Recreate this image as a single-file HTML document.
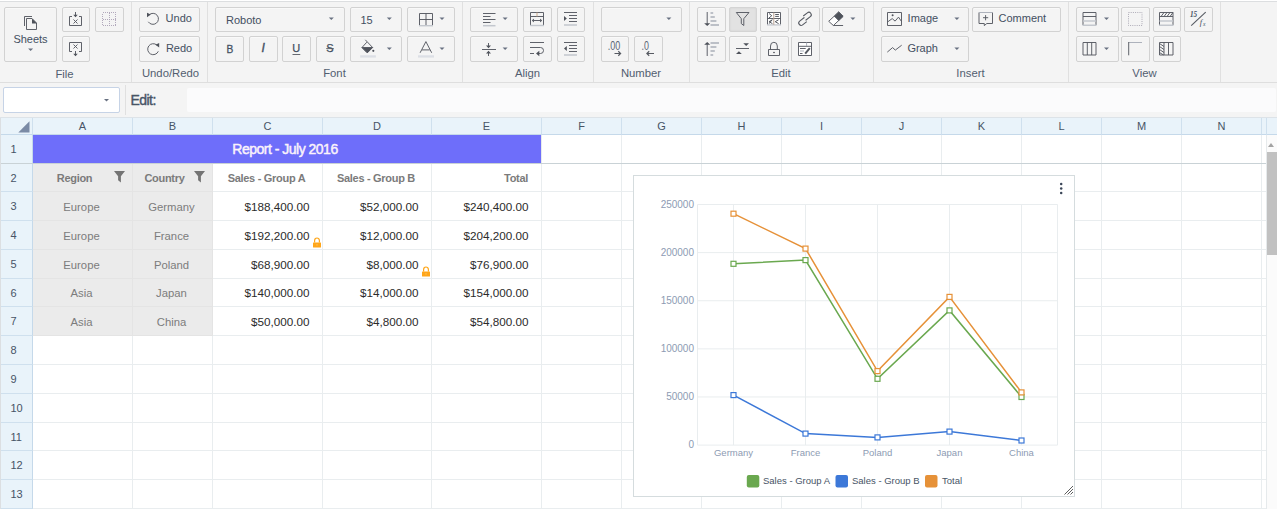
<!DOCTYPE html>
<html lang="en"><head><meta charset="utf-8"><title>Spreadsheet</title>
<style>
*{box-sizing:border-box;margin:0;padding:0}
html,body{width:1277px;height:509px;overflow:hidden;background:#fff}
body{font-family:"Liberation Sans",sans-serif;color:#475466;position:relative}
#tb{position:absolute;left:0;top:0;width:1277px;height:83px;background:#f4f4f4;border-bottom:1px solid #dedede}
#tb::before{content:'';position:absolute;left:0;top:0;width:100%;height:2px;background:linear-gradient(#fff 0,#fff 1px,#dcdee0 1px,#dcdee0 2px)}
#tb .sep{position:absolute;top:2px;height:80px;width:1px;background:#e0e0e0}
#ov{position:absolute;left:0;top:0}
#ov text{font-family:"Liberation Sans",sans-serif;stroke:none;fill:#434f61;font-size:11px}
#ov .gl{font-size:11.3px;fill:#525e70}
#ov .fb{font-size:11.8px;stroke:#475466;stroke-width:.3px}
.fu,.fs{stroke:#434f61!important;stroke-width:.25px!important}
#ov .fi{font-style:italic;font-size:12px;stroke:#475466;stroke-width:.4px}
#ov .nm{font-size:12.3px;fill:#5a6576}
#ov .fx1{font-family:"Liberation Serif",serif;font-style:italic;font-weight:bold;font-size:7.2px}
#ov .fx3{font-family:"Liberation Serif",serif;font-style:italic;font-size:5.5px}
#ov .fx2{font-family:"Liberation Serif",serif;font-style:italic;font-size:8.5px}
.b{position:absolute;border:1px solid #d2d2d2;border-radius:2px;background:#f4f4f4;box-shadow:inset 0 1px #f9f9f9}
.b.act{background:#e2e2e2;border-color:#d4d4d4;box-shadow:inset 0 0 2px #d0d0d0}
#fb{position:absolute;left:0;top:83px;width:1277px;height:34px;background:#f4f4f4}
#fb .nb{position:absolute;left:3px;top:4px;width:117px;height:26px;background:#fff;border:1px solid #c6d3e6;border-radius:2px}
#fb .fsep{position:absolute;left:125px;top:2px;width:1px;height:30px;background:#e0e0e0}
#fb .el{position:absolute;left:130.5px;top:9px;font-size:14px;-webkit-text-stroke:.4px #475466;line-height:16px;color:#475466;letter-spacing:-.55px}
#fb .ei{position:absolute;left:187px;top:5px;width:1089px;height:24px;background:#fbfbfc;border-radius:2px}
#grid{position:absolute;left:0;top:117px;width:1277px;height:392px;overflow:hidden;background:#fff}
#grid::before{content:'';position:absolute;z-index:3;left:0;top:0;width:100%;height:1px;background:#dde3e8}
.ch{position:absolute;top:0;height:18px;background:#e9f3fa;border-right:1px solid #cfe0ee;border-bottom:1px solid #c5d9ea;font-size:11px;line-height:18px;text-align:center;color:#475466}
.ch .tri{position:absolute;left:18.300px;top:3.700px}
.row{position:absolute;left:0;width:1277px}
.rh{position:absolute;left:0;top:0;width:33px;height:100%;background:#e9f3fa;border-right:1px solid #c5d9ea;border-bottom:1px solid #cfe0ee;font-size:11px;text-align:center;color:#475466;display:flex;align-items:center;justify-content:flex-start;padding-left:10.5px}
.c{position:absolute;top:0;height:100%;border-right:1px solid #e9edef;border-bottom:1px solid #e9edef;font-size:11.3px;color:#666;white-space:nowrap;display:flex;align-items:center;justify-content:center;padding:0 14px 0 12px}
.c.g{background:#ebebeb;border-color:#e4e4e4;color:#7c7c7c;padding-top:1.5px}
.c.n{justify-content:flex-end;color:#2b2b2b;font-size:11.7px;padding-right:12.5px}
.c.hd{font-weight:bold;color:#7b7b7b;padding-top:0;font-size:11px;letter-spacing:-.3px}
.c.hd.r{justify-content:flex-end;padding-right:13px}
.c.title{background:#6e6efa;color:#fbf3fb;font-size:14px;-webkit-text-stroke:.45px #fbf3fb;letter-spacing:-.5px;padding-bottom:1px;border-color:#6e6efa;border-right-color:#e6eaec;padding-right:16px}
.c svg{position:absolute}
.c.f{padding-right:28px}
.c .fn{right:7.500px;top:6.800px}
.c .lk{right:1.100px;bottom:1.500px}
.frz{position:absolute;left:0;top:46px;width:1277px;height:1px;background:#c9d2d6}
.lb{position:absolute;left:0;top:0;width:1px;height:392px;background:#dcdfe2}
.sb{position:absolute;left:1266px;top:18px;width:11px;height:374px;background:#fbfbfb;border-left:1px solid #e6eaec}
.sb .up{position:absolute;left:0.9px;top:7.5px;width:0;height:0;border-left:3.5px solid transparent;border-right:3.5px solid transparent;border-bottom:4px solid #a3a3a3}
.sb .th{position:absolute;left:0;top:17px;width:10px;height:102.5px;background:#c1c1c1}
#chart{position:absolute;left:633px;top:58px;width:442px;height:322px;background:#fff;border:1px solid #d5dcde}
#chart svg{position:absolute;left:0;top:0}
#chart text{font-family:"Liberation Sans",sans-serif;font-size:9.5px;fill:#8d9bb3}
#chart .yl{font-size:10px}
#chart .lg{fill:#475466}

.hl{position:absolute;left:1266px;top:0;width:1px;height:18px;background:#cfe0ee;z-index:2}

</style></head>
<body>
<div id="tb">
<i class="sep" style="left:131px"></i>
<i class="sep" style="left:207px"></i>
<i class="sep" style="left:462px"></i>
<i class="sep" style="left:593px"></i>
<i class="sep" style="left:689px"></i>
<i class="sep" style="left:873px"></i>
<i class="sep" style="left:1068px"></i>
<i class="sep" style="left:1220px"></i>
<div class="b" style="left:4px;top:7px;width:53px;height:55px"></div>
<div class="b" style="left:62px;top:7px;width:28px;height:25px"></div>
<div class="b" style="left:95px;top:7px;width:29px;height:25px"></div>
<div class="b" style="left:62px;top:36px;width:28px;height:26px"></div>
<div class="b" style="left:139px;top:7px;width:61px;height:25px"></div>
<div class="b" style="left:139px;top:36px;width:61px;height:26px"></div>
<div class="b" style="left:215px;top:7px;width:130px;height:25px"></div>
<div class="b" style="left:350px;top:7px;width:52px;height:25px"></div>
<div class="b" style="left:407px;top:7px;width:48px;height:25px"></div>
<div class="b" style="left:215px;top:36px;width:29px;height:26px"></div>
<div class="b" style="left:248.5px;top:36px;width:29px;height:26px"></div>
<div class="b" style="left:282px;top:36px;width:29px;height:26px"></div>
<div class="b" style="left:315.5px;top:36px;width:29px;height:26px"></div>
<div class="b" style="left:350px;top:36px;width:52px;height:26px"></div>
<div class="b" style="left:407px;top:36px;width:48px;height:26px"></div>
<div class="b" style="left:470px;top:7px;width:48px;height:25px"></div>
<div class="b" style="left:523px;top:7px;width:29px;height:25px"></div>
<div class="b" style="left:557px;top:7px;width:28px;height:25px"></div>
<div class="b" style="left:470px;top:36px;width:48px;height:26px"></div>
<div class="b" style="left:523px;top:36px;width:29px;height:26px"></div>
<div class="b" style="left:557px;top:36px;width:28px;height:26px"></div>
<div class="b" style="left:601px;top:7px;width:81px;height:25px"></div>
<div class="b" style="left:601px;top:36px;width:28px;height:26px"></div>
<div class="b" style="left:634px;top:36px;width:29px;height:26px"></div>
<div class="b" style="left:697px;top:7px;width:29px;height:25px"></div>
<div class="b act" style="left:729px;top:7px;width:28px;height:25px"></div>
<div class="b" style="left:760px;top:7px;width:29px;height:25px"></div>
<div class="b" style="left:791px;top:7px;width:29px;height:25px"></div>
<div class="b" style="left:822px;top:7px;width:43px;height:25px"></div>
<div class="b" style="left:697px;top:36px;width:29px;height:26px"></div>
<div class="b" style="left:729px;top:36px;width:28px;height:26px"></div>
<div class="b" style="left:760px;top:36px;width:29px;height:26px"></div>
<div class="b" style="left:791px;top:36px;width:29px;height:26px"></div>
<div class="b" style="left:881px;top:7px;width:88px;height:25px"></div>
<div class="b" style="left:972px;top:7px;width:89px;height:25px"></div>
<div class="b" style="left:881px;top:36px;width:88px;height:26px"></div>
<div class="b" style="left:1076px;top:7px;width:43px;height:25px"></div>
<div class="b" style="left:1121px;top:7px;width:29px;height:25px"></div>
<div class="b" style="left:1153px;top:7px;width:28px;height:25px"></div>
<div class="b" style="left:1184px;top:7px;width:29px;height:25px"></div>
<div class="b" style="left:1076px;top:36px;width:43px;height:26px"></div>
<div class="b" style="left:1121px;top:36px;width:29px;height:26px"></div>
<div class="b" style="left:1153px;top:36px;width:28px;height:26px"></div>
<svg id="ov" width="1277" height="83" viewBox="0 0 1277 83" fill="none" stroke="#565a62" stroke-width="0.950">
<text x="64.5" y="78" class="gl" text-anchor="middle">File</text>
<text x="170.5" y="77" class="gl" text-anchor="middle">Undo/Redo</text>
<text x="334.5" y="77" class="gl" text-anchor="middle">Font</text>
<text x="527.5" y="77" class="gl" text-anchor="middle">Align</text>
<text x="641" y="77" class="gl" text-anchor="middle">Number</text>
<text x="781" y="77" class="gl" text-anchor="middle">Edit</text>
<text x="970.5" y="77" class="gl" text-anchor="middle">Insert</text>
<text x="1144.5" y="77" class="gl" text-anchor="middle">View</text>
<path d="M24.500 26V16.500H32"/><path d="M26.500 18.500H32L36.500 23V29.500H26.500Z"/><path d="M32 18.500V23.500H37Z" fill="#4e525a" stroke="none"/>
<text x="30.5" y="42.8" class="t" text-anchor="middle">Sheets</text>
<path d="M28.1 48.4h5l-2.5 2.600z" fill="#687181" stroke="none"/>
<path d="M72 16.500H69.500V25.500H81.500V16.500H79M73.500 19.500l4 4m0-4l-4 4M75.500 12V16.500"/>
<path d="M73.300 14.800h4.400l-2.200 2.400z" fill="#4e525a" stroke="none"/>
<path d="M72 51.500H69.500V42.500H81.500V51.500H79M73.500 44.500l4 4m0-4l-4 4M75.500 51V55.500"/>
<path d="M73.300 53.800h4.400l-2.200 2.400z" fill="#4e525a" stroke="none"/>
<path d="M102.500 12.500H115.500V25.500H102.500ZM102.500 19.500H115.500M109.500 12.500V25.500" stroke="#aea4b8" stroke-dasharray="1 1" shape-rendering="crispEdges"/>
<path d="M149.100 14.900A5.500 5.500 0 1 1 148.300 21.800"/>
<path d="M147 12.800v4.400l3.800-2.600z" fill="#4e525a" stroke="none"/>
<path d="M156.900 45.100A5.500 5.500 0 1 0 158.300 51.300"/>
<path d="M159.200 43v4.400l-3.800-2.600z" fill="#4e525a" stroke="none"/>
<text x="165.6" y="21.7" class="t">Undo</text>
<text x="165.9" y="52.1" class="t">Redo</text>
<text x="226" y="23.9" class="t">Roboto</text>
<path d="M328.8 17.5h5l-2.5 2.600z" fill="#687181" stroke="none"/>
<text x="360.5" y="24" class="t">15</text>
<path d="M386.8 17.5h5l-2.5 2.600z" fill="#687181" stroke="none"/>
<path d="M419.500 25.500V13.500H432.500V25.500M419.500 19.500H432.500M426 13.500V25.500"/><path d="M419 25.700H433" stroke="#c3c7ce" stroke-width="1.400"/>
<path d="M439.5 17.5h5l-2.5 2.600z" fill="#687181" stroke="none"/>
<text x="226.4" y="52.6" class="t fb" textLength="6.800" lengthAdjust="spacingAndGlyphs">B</text>
<text x="263.2" y="52.4" class="t fi" text-anchor="middle">I</text>
<text x="296.3" y="52.4" class="t fu" text-anchor="middle">U</text>
<text x="330" y="52.4" class="t fs" text-anchor="middle">S</text>
<path d="M292.500 54.500H300.300" stroke-width="0.900"/><path d="M326.200 48.600H333.800" stroke-width="0.900"/>
<path d="M365.300 39.800L372.600 47.500L367.300 52.800L362 47.500L366.800 42.200"/><path d="M362 47.500H372.600L367.300 52.800Z" fill="#4e525a"/><circle cx="373.300" cy="50.800" r="1.100" fill="#4e525a" stroke="none"/>
<rect x="360.200" y="55.300" width="15.700" height="2.300" fill="#dcdfe5" stroke="none"/>
<path d="M386.8 47.5h5l-2.5 2.600z" fill="#687181" stroke="none"/>
<path d="M420.100 52.800L425.900 41.600L431.700 52.800M422 49.900H429.800"/>
<rect x="418" y="55.300" width="16" height="2.300" fill="#dcdfe5" stroke="none"/>
<path d="M439.5 47.5h5l-2.5 2.600z" fill="#687181" stroke="none"/>
<path d="M483 13.500H495.500M483 16.500H490.500M483 19.500H495.500M483 22.500H490.500"/><path d="M483 25.700H495.500" stroke="#c3c7ce" stroke-width="1.500"/>
<path d="M502.6 17.5h5l-2.5 2.600z" fill="#687181" stroke="none"/>
<path d="M530.500 25.500V12.500H543.500V25.500M530.500 16.500H543.500M532.500 20.500H541.500M534 19l-1.800 1.500 1.800 1.500M540 19l1.800 1.500-1.800 1.500"/><path d="M537 12.500V16.500" stroke="#c9a98a"/><path d="M530 25.500H544" stroke="#c3c7ce" stroke-width="1.400"/>
<path d="M564 12.500H577M569 15.500H577M569 18.500H577M569 21.500H577"/><path d="M564 25H577" stroke="#c3c7ce" stroke-width="1.500"/><path d="M564 16V21L566.800 18.500Z" fill="#4e525a" stroke="none"/>
<path d="M482 49.500H496M488.500 43V46M488.500 56V53"/><path d="M486 45.400h5l-2.500 2.800zM486 53.600h5l-2.500-2.800z" fill="#4e525a" stroke="none"/>
<path d="M502.6 47.5h5l-2.5 2.600z" fill="#687181" stroke="none"/>
<path d="M530 42.500H544M530 47.500H540.500a3 3 0 0 1 0 6H538M530 53.500H534"/><path d="M539.300 50.800v5.400l-3.300-2.700z" fill="#4e525a" stroke="none"/>
<path d="M564 42.500H577M569 45.500H577M569 48.500H577M569 51.500H577"/><path d="M564 55H577" stroke="#c3c7ce" stroke-width="1.500"/><path d="M566.800 46V51L564 48.500Z" fill="#4e525a" stroke="none"/>
<path d="M666.4 17.5h5l-2.5 2.600z" fill="#687181" stroke="none"/>
<text x="607.8" y="50.1" class="nm" textLength="12.5" lengthAdjust="spacingAndGlyphs">.00</text>
<path d="M614.500 53.500H620.300M618.300 51.300l2.300 2.200-2.300 2.200" stroke-width="1.200"/>
<text x="641.6" y="50.1" class="nm" textLength="7.400" lengthAdjust="spacingAndGlyphs">.0</text>
<path d="M654 53.500H647.200M649.200 51.300l-2.300 2.200 2.300 2.200" stroke-width="1.200"/>
<path d="M707.200 12V24"/><path d="M704.200 23.200h6l-3 2.800z" fill="#4e525a" stroke="none"/><path d="M710.500 13H713.200M710.500 17H714.800M710.500 21H716.400M710.500 25H719" stroke="#a9aeb8" stroke-width="1.500"/>
<path d="M707.200 56V44"/><path d="M704.200 44.800h6l-3-2.800z" fill="#4e525a" stroke="none"/><path d="M710.500 43H719M710.500 47H716.400M710.500 51H714.800M710.500 55H713.200" stroke="#a9aeb8" stroke-width="1.500"/>
<path d="M736.300 12.500H749L743.800 18.700V25.500L741.300 23.600V18.700Z"/>
<path d="M767.500 24.800V12.500H780.500V24.800" fill="#fff"/><path d="M767 24.900H781" stroke="#c3c7ce" stroke-width="1.300"/><path d="M767.500 18.500H780.500"/><path d="M773.800 12.500V24.800" stroke="#b9a08f"/><path d="M769 13.500l2.800 2.200-2.800 2.200M775.200 14.500h3.700M775.200 16.400h3.700M772.400 19.800l-3.400 1.900 3.400 1.900M769.300 23.600l2.600-3.800M778.600 19.800l-3.400 1.900 3.400 1.900" stroke-width="1"/>
<g stroke-width="1.100"><rect x="-5.100" y="-2.400" width="10.200" height="4.800" rx="2.400" stroke-dasharray="6 6.400 100" transform="translate(803.300 21.300) rotate(-38)"/><rect x="-5.100" y="-2.400" width="10.200" height="4.800" rx="2.400" stroke-dasharray="6 6.400 100" transform="translate(806.700 16.400) rotate(142)"/></g>
<path d="M838.700 12L843.100 16.300L833.400 25.500L828.700 21.300Z" fill="#fff"/><path d="M838.700 12L843.100 16.300L838.700 20.500L834.400 16.200Z" fill="#4e525a"/><path d="M833.400 25.500H843.100"/>
<path d="M850.4 17.5h5l-2.5 2.600z" fill="#687181" stroke="none"/>
<path d="M736 48.500H749"/><path d="M743.300 43.300h5.700l-2.850 2.700zM736 54h5.800l-2.900-2.700z" fill="#4e525a" stroke="none"/>
<path d="M768.500 49.500H779.500V55.500H768.500ZM770.500 49.500V46a3.400 3.700 0 0 1 6.800 0V49.500"/><rect x="773.200" y="51.900" width="1.600" height="1.200" fill="#4e525a" stroke="none"/>
<path d="M798.500 42.500H811.500V55.500H798.500Z" fill="#fff"/><path d="M798.500 46.300H811.500M800 48.500H805.700M800 53.500H802.500"/><path d="M806.600 42.500V46M800 51H804" stroke="#a9aeb8"/><path d="M805.200 53.600L809.800 48.100" stroke-width="2"/>
<path d="M887.500 12.500H901.500V25.500H887.500ZM887.500 22L892.200 18.600L895.100 21.100L898.500 17.100L901.500 21.500"/><circle cx="892.600" cy="15.200" r="1" fill="#4e525a" stroke="none"/>
<text x="907.6" y="21.7" class="t">Image</text>
<path d="M954.4 17.5h5l-2.5 2.600z" fill="#687181" stroke="none"/>
<path d="M979 23.500V12.500M992.500 12.500V23.500H986.800L984.300 25.600V23.500H979M983 17.700H988.200M985.600 15.100V20.300"/><path d="M979 12.500H992.500" stroke="#a9aeb8"/>
<text x="998.5" y="21.7" class="t">Comment</text>
<path d="M887.300 52.100L892.600 47.600L895.300 50.100L901.700 45.200"/>
<text x="907.4" y="52.1" class="t">Graph</text>
<path d="M954.4 47.5h5l-2.5 2.600z" fill="#687181" stroke="none"/>
<path d="M1083 25V12.500H1096V25M1083 16.500H1096"/><path d="M1083 21H1096M1082.500 25.200H1096.500" stroke="#c3c7ce" stroke-width="1.500"/>
<path d="M1104.0 17.5h5l-2.5 2.600z" fill="#687181" stroke="none"/>
<path d="M1128.500 12.500H1142V25.500H1128.500Z" stroke="#a9a7b3" stroke-dasharray="1 1.200"/>
<path d="M1159.500 25V12.500H1173V25M1159.500 16.500H1173M1161 16.500l3-4M1164 16.500l3-4M1167 16.500l3-4M1170 16.500l3-4"/><path d="M1159.500 21H1173M1159 25.200H1173.500" stroke="#c3c7ce" stroke-width="1.500"/>
<path d="M1191.200 25.600L1205.700 12.200" stroke-width="1.100"/>
<text x="1190" y="17" class="fx1">15</text>
<text x="1199.8" y="25" class="fx2">f</text>
<text x="1203" y="25.8" class="fx3">x</text>
<path d="M1083 42.500H1096V55H1083ZM1087.300 42.500V55M1091.700 42.500V55"/>
<path d="M1104.0 47.5h5l-2.5 2.600z" fill="#687181" stroke="none"/>
<path d="M1128.700 42.500H1142" stroke="#a9aeb8"/><path d="M1128.700 55.300V42"/>
<path d="M1159.500 42.500H1173V55H1159.500ZM1164 42.500V55M1168.500 42.500V55M1159.500 43.500l4.500 3M1159.500 46.500l4.500 3M1159.500 49.500l4.500 3M1159.500 52.500l4 2.500" />
</svg>
</div>
<div id="fb"><div class="nb"><svg width="5" height="3" style="position:absolute;left:100.3px;top:10.500px"><path d="M0 0h5l-2.500 2.600z" fill="#687181"/></svg></div><i class="fsep"></i><span class="el">Edit:</span><div class="ei"></div></div>
<div id="grid">
<div class="ch" style="left:0;width:33px"><svg class="tri" width="12" height="12" viewBox="0 0 12 12"><path d="M11.500 0.300V11.500H0.300Z" fill="#7a8aa5"/></svg></div>
<div class="ch" style="left:33px;width:100px">A</div>
<div class="ch" style="left:133px;width:80px">B</div>
<div class="ch" style="left:213px;width:110px">C</div>
<div class="ch" style="left:323px;width:109px">D</div>
<div class="ch" style="left:432px;width:110px">E</div>
<div class="ch" style="left:542px;width:80px">F</div>
<div class="ch" style="left:622px;width:80px">G</div>
<div class="ch" style="left:702px;width:80px">H</div>
<div class="ch" style="left:782px;width:80px">I</div>
<div class="ch" style="left:862px;width:80px">J</div>
<div class="ch" style="left:942px;width:80px">K</div>
<div class="ch" style="left:1022px;width:80px">L</div>
<div class="ch" style="left:1102px;width:80px">M</div>
<div class="ch" style="left:1182px;width:80px">N</div>
<div class="ch" style="left:1262px;width:80px">O</div>
<div class="row" style="top:18px;height:29px"><div class="rh">1</div>
<div class="c title" style="left:33px;width:509px">Report - July 2016</div>
<div class="c" style="left:542px;width:80px"></div>
<div class="c" style="left:622px;width:80px"></div>
<div class="c" style="left:702px;width:80px"></div>
<div class="c" style="left:782px;width:80px"></div>
<div class="c" style="left:862px;width:80px"></div>
<div class="c" style="left:942px;width:80px"></div>
<div class="c" style="left:1022px;width:80px"></div>
<div class="c" style="left:1102px;width:80px"></div>
<div class="c" style="left:1182px;width:80px"></div>
<div class="c" style="left:1262px;width:80px"></div>
</div>
<div class="row" style="top:47px;height:28px"><div class="rh">2</div>
<div class="c hd g f" style="left:33px;width:100px"><span>Region</span><svg class="fn" width="11" height="12" viewBox="0 0 11 12"><path d="M0 0H11L6.900 5.200V11.500L4.100 9.300V5.200Z" fill="#747474"/></svg></div>
<div class="c hd g f" style="left:133px;width:80px"><span>Country</span><svg class="fn" width="11" height="12" viewBox="0 0 11 12"><path d="M0 0H11L6.900 5.200V11.500L4.100 9.300V5.200Z" fill="#747474"/></svg></div>
<div class="c hd" style="left:213px;width:110px"><span>Sales - Group A</span></div>
<div class="c hd" style="left:323px;width:109px"><span>Sales - Group B</span></div>
<div class="c hd r" style="left:432px;width:110px"><span>Total</span></div>
<div class="c" style="left:542px;width:80px"></div>
<div class="c" style="left:622px;width:80px"></div>
<div class="c" style="left:702px;width:80px"></div>
<div class="c" style="left:782px;width:80px"></div>
<div class="c" style="left:862px;width:80px"></div>
<div class="c" style="left:942px;width:80px"></div>
<div class="c" style="left:1022px;width:80px"></div>
<div class="c" style="left:1102px;width:80px"></div>
<div class="c" style="left:1182px;width:80px"></div>
<div class="c" style="left:1262px;width:80px"></div>
</div>
<div class="row" style="top:75px;height:29px"><div class="rh">3</div>
<div class="c g" style="left:33px;width:100px">Europe</div>
<div class="c g" style="left:133px;width:80px">Germany</div>
<div class="c n" style="left:213px;width:110px">$188,400.00</div>
<div class="c n" style="left:323px;width:109px">$52,000.00</div>
<div class="c n" style="left:432px;width:110px">$240,400.00</div>
<div class="c" style="left:542px;width:80px"></div>
<div class="c" style="left:622px;width:80px"></div>
<div class="c" style="left:702px;width:80px"></div>
<div class="c" style="left:782px;width:80px"></div>
<div class="c" style="left:862px;width:80px"></div>
<div class="c" style="left:942px;width:80px"></div>
<div class="c" style="left:1022px;width:80px"></div>
<div class="c" style="left:1102px;width:80px"></div>
<div class="c" style="left:1182px;width:80px"></div>
<div class="c" style="left:1262px;width:80px"></div>
</div>
<div class="row" style="top:104px;height:29px"><div class="rh">4</div>
<div class="c g" style="left:33px;width:100px">Europe</div>
<div class="c g" style="left:133px;width:80px">France</div>
<div class="c n" style="left:213px;width:110px">$192,200.00<svg class="lk" width="8" height="10.400" viewBox="0 0 8 10.400"><path d="M1.600 5.400V3.500a2.400 2.500 0 0 1 4.800 0V5.400" fill="none" stroke="#ffa61a" stroke-width="1.200"/><rect x="0" y="5.500" width="8" height="4.900" rx="0.500" fill="#ffa61a"/><rect x="3.300" y="7.300" width="1.400" height="1.200" fill="#ffc158"/></svg></div>
<div class="c n" style="left:323px;width:109px">$12,000.00</div>
<div class="c n" style="left:432px;width:110px">$204,200.00</div>
<div class="c" style="left:542px;width:80px"></div>
<div class="c" style="left:622px;width:80px"></div>
<div class="c" style="left:702px;width:80px"></div>
<div class="c" style="left:782px;width:80px"></div>
<div class="c" style="left:862px;width:80px"></div>
<div class="c" style="left:942px;width:80px"></div>
<div class="c" style="left:1022px;width:80px"></div>
<div class="c" style="left:1102px;width:80px"></div>
<div class="c" style="left:1182px;width:80px"></div>
<div class="c" style="left:1262px;width:80px"></div>
</div>
<div class="row" style="top:133px;height:29px"><div class="rh">5</div>
<div class="c g" style="left:33px;width:100px">Europe</div>
<div class="c g" style="left:133px;width:80px">Poland</div>
<div class="c n" style="left:213px;width:110px">$68,900.00</div>
<div class="c n" style="left:323px;width:109px">$8,000.00<svg class="lk" width="8" height="10.400" viewBox="0 0 8 10.400"><path d="M1.600 5.400V3.500a2.400 2.500 0 0 1 4.800 0V5.400" fill="none" stroke="#ffa61a" stroke-width="1.200"/><rect x="0" y="5.500" width="8" height="4.900" rx="0.500" fill="#ffa61a"/><rect x="3.300" y="7.300" width="1.400" height="1.200" fill="#ffc158"/></svg></div>
<div class="c n" style="left:432px;width:110px">$76,900.00</div>
<div class="c" style="left:542px;width:80px"></div>
<div class="c" style="left:622px;width:80px"></div>
<div class="c" style="left:702px;width:80px"></div>
<div class="c" style="left:782px;width:80px"></div>
<div class="c" style="left:862px;width:80px"></div>
<div class="c" style="left:942px;width:80px"></div>
<div class="c" style="left:1022px;width:80px"></div>
<div class="c" style="left:1102px;width:80px"></div>
<div class="c" style="left:1182px;width:80px"></div>
<div class="c" style="left:1262px;width:80px"></div>
</div>
<div class="row" style="top:162px;height:28px"><div class="rh">6</div>
<div class="c g" style="left:33px;width:100px">Asia</div>
<div class="c g" style="left:133px;width:80px">Japan</div>
<div class="c n" style="left:213px;width:110px">$140,000.00</div>
<div class="c n" style="left:323px;width:109px">$14,000.00</div>
<div class="c n" style="left:432px;width:110px">$154,000.00</div>
<div class="c" style="left:542px;width:80px"></div>
<div class="c" style="left:622px;width:80px"></div>
<div class="c" style="left:702px;width:80px"></div>
<div class="c" style="left:782px;width:80px"></div>
<div class="c" style="left:862px;width:80px"></div>
<div class="c" style="left:942px;width:80px"></div>
<div class="c" style="left:1022px;width:80px"></div>
<div class="c" style="left:1102px;width:80px"></div>
<div class="c" style="left:1182px;width:80px"></div>
<div class="c" style="left:1262px;width:80px"></div>
</div>
<div class="row" style="top:190px;height:29px"><div class="rh">7</div>
<div class="c g" style="left:33px;width:100px">Asia</div>
<div class="c g" style="left:133px;width:80px">China</div>
<div class="c n" style="left:213px;width:110px">$50,000.00</div>
<div class="c n" style="left:323px;width:109px">$4,800.00</div>
<div class="c n" style="left:432px;width:110px">$54,800.00</div>
<div class="c" style="left:542px;width:80px"></div>
<div class="c" style="left:622px;width:80px"></div>
<div class="c" style="left:702px;width:80px"></div>
<div class="c" style="left:782px;width:80px"></div>
<div class="c" style="left:862px;width:80px"></div>
<div class="c" style="left:942px;width:80px"></div>
<div class="c" style="left:1022px;width:80px"></div>
<div class="c" style="left:1102px;width:80px"></div>
<div class="c" style="left:1182px;width:80px"></div>
<div class="c" style="left:1262px;width:80px"></div>
</div>
<div class="row" style="top:219px;height:29px"><div class="rh">8</div>
<div class="c" style="left:33px;width:100px"></div>
<div class="c" style="left:133px;width:80px"></div>
<div class="c" style="left:213px;width:110px"></div>
<div class="c" style="left:323px;width:109px"></div>
<div class="c" style="left:432px;width:110px"></div>
<div class="c" style="left:542px;width:80px"></div>
<div class="c" style="left:622px;width:80px"></div>
<div class="c" style="left:702px;width:80px"></div>
<div class="c" style="left:782px;width:80px"></div>
<div class="c" style="left:862px;width:80px"></div>
<div class="c" style="left:942px;width:80px"></div>
<div class="c" style="left:1022px;width:80px"></div>
<div class="c" style="left:1102px;width:80px"></div>
<div class="c" style="left:1182px;width:80px"></div>
<div class="c" style="left:1262px;width:80px"></div>
</div>
<div class="row" style="top:248px;height:29px"><div class="rh">9</div>
<div class="c" style="left:33px;width:100px"></div>
<div class="c" style="left:133px;width:80px"></div>
<div class="c" style="left:213px;width:110px"></div>
<div class="c" style="left:323px;width:109px"></div>
<div class="c" style="left:432px;width:110px"></div>
<div class="c" style="left:542px;width:80px"></div>
<div class="c" style="left:622px;width:80px"></div>
<div class="c" style="left:702px;width:80px"></div>
<div class="c" style="left:782px;width:80px"></div>
<div class="c" style="left:862px;width:80px"></div>
<div class="c" style="left:942px;width:80px"></div>
<div class="c" style="left:1022px;width:80px"></div>
<div class="c" style="left:1102px;width:80px"></div>
<div class="c" style="left:1182px;width:80px"></div>
<div class="c" style="left:1262px;width:80px"></div>
</div>
<div class="row" style="top:277px;height:29px"><div class="rh">10</div>
<div class="c" style="left:33px;width:100px"></div>
<div class="c" style="left:133px;width:80px"></div>
<div class="c" style="left:213px;width:110px"></div>
<div class="c" style="left:323px;width:109px"></div>
<div class="c" style="left:432px;width:110px"></div>
<div class="c" style="left:542px;width:80px"></div>
<div class="c" style="left:622px;width:80px"></div>
<div class="c" style="left:702px;width:80px"></div>
<div class="c" style="left:782px;width:80px"></div>
<div class="c" style="left:862px;width:80px"></div>
<div class="c" style="left:942px;width:80px"></div>
<div class="c" style="left:1022px;width:80px"></div>
<div class="c" style="left:1102px;width:80px"></div>
<div class="c" style="left:1182px;width:80px"></div>
<div class="c" style="left:1262px;width:80px"></div>
</div>
<div class="row" style="top:306px;height:28px"><div class="rh">11</div>
<div class="c" style="left:33px;width:100px"></div>
<div class="c" style="left:133px;width:80px"></div>
<div class="c" style="left:213px;width:110px"></div>
<div class="c" style="left:323px;width:109px"></div>
<div class="c" style="left:432px;width:110px"></div>
<div class="c" style="left:542px;width:80px"></div>
<div class="c" style="left:622px;width:80px"></div>
<div class="c" style="left:702px;width:80px"></div>
<div class="c" style="left:782px;width:80px"></div>
<div class="c" style="left:862px;width:80px"></div>
<div class="c" style="left:942px;width:80px"></div>
<div class="c" style="left:1022px;width:80px"></div>
<div class="c" style="left:1102px;width:80px"></div>
<div class="c" style="left:1182px;width:80px"></div>
<div class="c" style="left:1262px;width:80px"></div>
</div>
<div class="row" style="top:334px;height:29px"><div class="rh">12</div>
<div class="c" style="left:33px;width:100px"></div>
<div class="c" style="left:133px;width:80px"></div>
<div class="c" style="left:213px;width:110px"></div>
<div class="c" style="left:323px;width:109px"></div>
<div class="c" style="left:432px;width:110px"></div>
<div class="c" style="left:542px;width:80px"></div>
<div class="c" style="left:622px;width:80px"></div>
<div class="c" style="left:702px;width:80px"></div>
<div class="c" style="left:782px;width:80px"></div>
<div class="c" style="left:862px;width:80px"></div>
<div class="c" style="left:942px;width:80px"></div>
<div class="c" style="left:1022px;width:80px"></div>
<div class="c" style="left:1102px;width:80px"></div>
<div class="c" style="left:1182px;width:80px"></div>
<div class="c" style="left:1262px;width:80px"></div>
</div>
<div class="row" style="top:363px;height:29px"><div class="rh">13</div>
<div class="c" style="left:33px;width:100px"></div>
<div class="c" style="left:133px;width:80px"></div>
<div class="c" style="left:213px;width:110px"></div>
<div class="c" style="left:323px;width:109px"></div>
<div class="c" style="left:432px;width:110px"></div>
<div class="c" style="left:542px;width:80px"></div>
<div class="c" style="left:622px;width:80px"></div>
<div class="c" style="left:702px;width:80px"></div>
<div class="c" style="left:782px;width:80px"></div>
<div class="c" style="left:862px;width:80px"></div>
<div class="c" style="left:942px;width:80px"></div>
<div class="c" style="left:1022px;width:80px"></div>
<div class="c" style="left:1102px;width:80px"></div>
<div class="c" style="left:1182px;width:80px"></div>
<div class="c" style="left:1262px;width:80px"></div>
</div>
<i class="frz"></i><i class="lb"></i><i class="hl"></i>
<div class="sb"><i class="up"></i><i class="th"></i></div>
<div id="chart"><svg width="440" height="320" viewBox="0 0 440 320">
<path d="M63.5 28.5V269.1M99.5 28.5V269.1M171.5 28.5V269.1M243.5 28.5V269.1M315.5 28.5V269.1M387.5 28.5V269.1M423.5 28.5V269.1M63.5 28.50H423.5M63.5 76.62H423.5M63.5 124.74H423.5M63.5 172.86H423.5M63.5 220.98H423.5M63.5 269.10H423.5" stroke="#e9edef" stroke-width="1" fill="none"/>
<text x="60" y="31.5" class="yl" text-anchor="end">250000</text>
<text x="60" y="79.6" class="yl" text-anchor="end">200000</text>
<text x="60" y="127.7" class="yl" text-anchor="end">150000</text>
<text x="60" y="175.9" class="yl" text-anchor="end">100000</text>
<text x="60" y="224.0" class="yl" text-anchor="end">50000</text>
<text x="60" y="272.1" class="yl" text-anchor="end">0</text>
<text x="99.5" y="279.8" text-anchor="middle">Germany</text>
<text x="171.5" y="279.8" text-anchor="middle">France</text>
<text x="243.5" y="279.8" text-anchor="middle">Poland</text>
<text x="315.5" y="279.8" text-anchor="middle">Japan</text>
<text x="387.5" y="279.8" text-anchor="middle">China</text>
<polyline points="99.5,87.8 171.5,84.1 243.5,202.8 315.5,134.4 387.5,221.0" fill="none" stroke="#6aa84f" stroke-width="1.5"/>
<rect x="97.0" y="85.3" width="5" height="5" fill="#fff" stroke="#6aa84f" stroke-width="1.2"/>
<rect x="169.0" y="81.6" width="5" height="5" fill="#fff" stroke="#6aa84f" stroke-width="1.2"/>
<rect x="241.0" y="200.3" width="5" height="5" fill="#fff" stroke="#6aa84f" stroke-width="1.2"/>
<rect x="313.0" y="131.9" width="5" height="5" fill="#fff" stroke="#6aa84f" stroke-width="1.2"/>
<rect x="385.0" y="218.5" width="5" height="5" fill="#fff" stroke="#6aa84f" stroke-width="1.2"/>
<polyline points="99.5,219.1 171.5,257.6 243.5,261.4 315.5,255.6 387.5,264.5" fill="none" stroke="#3c78d8" stroke-width="1.5"/>
<rect x="97.0" y="216.6" width="5" height="5" fill="#fff" stroke="#3c78d8" stroke-width="1.2"/>
<rect x="169.0" y="255.1" width="5" height="5" fill="#fff" stroke="#3c78d8" stroke-width="1.2"/>
<rect x="241.0" y="258.9" width="5" height="5" fill="#fff" stroke="#3c78d8" stroke-width="1.2"/>
<rect x="313.0" y="253.1" width="5" height="5" fill="#fff" stroke="#3c78d8" stroke-width="1.2"/>
<rect x="385.0" y="262.0" width="5" height="5" fill="#fff" stroke="#3c78d8" stroke-width="1.2"/>
<polyline points="99.5,37.7 171.5,72.6 243.5,195.1 315.5,120.9 387.5,216.4" fill="none" stroke="#e69138" stroke-width="1.5"/>
<rect x="97.0" y="35.2" width="5" height="5" fill="#fff" stroke="#e69138" stroke-width="1.2"/>
<rect x="169.0" y="70.1" width="5" height="5" fill="#fff" stroke="#e69138" stroke-width="1.2"/>
<rect x="241.0" y="192.6" width="5" height="5" fill="#fff" stroke="#e69138" stroke-width="1.2"/>
<rect x="313.0" y="118.4" width="5" height="5" fill="#fff" stroke="#e69138" stroke-width="1.2"/>
<rect x="385.0" y="213.9" width="5" height="5" fill="#fff" stroke="#e69138" stroke-width="1.2"/>
<rect x="112.8" y="299" width="12.5" height="12.5" rx="2" fill="#6aa84f"/>
<text class="lg" x="129" y="308.3">Sales - Group A</text>
<rect x="201.5" y="299" width="12.5" height="12.5" rx="2" fill="#3c78d8"/>
<text class="lg" x="218" y="308.3">Sales - Group B</text>
<rect x="291" y="299" width="12.5" height="12.5" rx="2" fill="#e69138"/>
<text class="lg" x="308" y="308.3">Total</text>
<circle cx="427.2" cy="8" r="1.25" fill="#3b4658"/>
<circle cx="427.2" cy="12.5" r="1.25" fill="#3b4658"/>
<circle cx="427.2" cy="17" r="1.25" fill="#3b4658"/>
<path d="M430.5 318.500l8.500-8.500M433.500 318.500l5.500-5.500M436.500 318.500l2.500-2.500" stroke="#333" stroke-width="0.800" fill="none"/>
</svg></div>
</div>
</body></html>
